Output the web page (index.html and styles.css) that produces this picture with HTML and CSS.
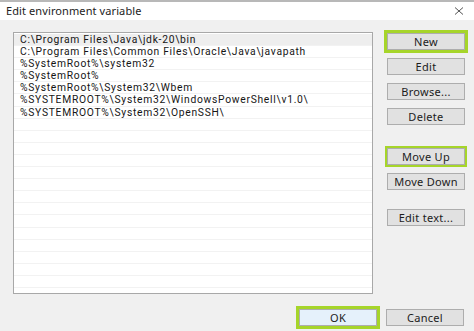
FILE: index.html
```html
<!DOCTYPE html>
<html>
<head>
<meta charset="utf-8">
<link rel="stylesheet" href="styles.css">
</head>
<body>
<div class="dialog">
  <div class="titlebar">
    <span class="title">Edit environment variable</span>
    <svg class="close" width="10" height="10" viewBox="0 0 10 10"><path d="M1 1.5 L9 8.5 M9 1.5 L1 8.5" stroke="#555" stroke-width="1" fill="none"/></svg>
  </div>
  <div class="content">
    <div class="main">
      <div class="list">
        <div class="row sel">C:\Program Files\Java\jdk-20\bin</div>
        <div class="row">C:\Program Files\Common Files\Oracle\Java\javapath</div>
        <div class="row">%SystemRoot%\system32</div>
        <div class="row">%SystemRoot%</div>
        <div class="row">%SystemRoot%\System32\Wbem</div>
        <div class="row">%SYSTEMROOT%\System32\WindowsPowerShell\v1.0\</div>
        <div class="row">%SYSTEMROOT%\System32\OpenSSH\</div>
        <div class="row"></div><div class="row"></div><div class="row"></div>
        <div class="row"></div><div class="row"></div><div class="row"></div>
        <div class="row"></div><div class="row"></div><div class="row"></div>
        <div class="row"></div><div class="row"></div><div class="row"></div>
        <div class="row"></div><div class="row"></div>
      </div>
      <div class="side">
        <button class="btn hl">New</button>
        <button class="btn">Edit</button>
        <button class="btn">Browse...</button>
        <button class="btn">Delete</button>
        <button class="btn hl2 g1">Move Up</button>
        <button class="btn">Move Down</button>
        <button class="btn g2">Edit text...</button>
      </div>
    </div>
    <div class="footer">
      <button class="btn ok hl">OK</button>
      <button class="btn">Cancel</button>
    </div>
  </div>
</div>
</body>
</html>
```
FILE: styles.css
```css
* { box-sizing: border-box; }
html, body { margin: 0; padding: 0; }
body {
  width: 474px;
  height: 331px;
  background: #f0f0f0;
  font-family: "Noto Sans", "Open Sans", sans-serif;
  overflow: hidden;
}
.dialog { width: 474px; height: 331px; display: flex; flex-direction: column; }
.titlebar {
  height: 20px;
  background: #fff;
  border-top: 2px solid #b8b8b8;
  display: flex;
  align-items: center;
  justify-content: space-between;
  padding: 0 10px 0 6px;
}
.title { font-size: 11px; color: #222; line-height: 14px; letter-spacing: 0.1px; }
.close { display: block; }
.content { padding: 12px 0 0 13px; display: flex; flex-direction: column; }
.main { display: flex; gap: 14px; }
.list {
  width: 360px;
  height: 262px;
  background: #fff;
  border: 1px solid #a8a8a8;
  padding-top: 1px;
  overflow: hidden;
}
.row {
  height: 12.1px;
  line-height: 12px;
  font-family: Roboto, "Liberation Sans", sans-serif;
  font-size: 10.3px;
  letter-spacing: 0.72px;
  color: #151515;
  padding-left: 6px;
  white-space: nowrap;
  border-bottom: 1px solid #f2f2f2;
}
.row.sel { background: #eeeeee; }
.side { display: flex; flex-direction: column; gap: 8px; padding-top: 1px; }
.btn {
  width: 78px;
  height: 17px;
  background: #e1e1e1;
  border: 1px solid #adadad;
  font-family: "Noto Sans", "Open Sans", sans-serif;
  font-size: 11px;
  letter-spacing: 0.3px;
  color: #1c1c1c;
  padding: 0;
  line-height: 15px;
  text-align: center;
}
.hl { outline: 3px solid #a6d52a; outline-offset: 0; }
.hl2 { outline: 2px solid #a6d52a; outline-offset: 0; }
.g1 { margin-top: 15px; }
.g2 { margin-top: 11px; }
.footer {
  display: flex;
  justify-content: flex-end;
  gap: 9px;
  padding-right: 10px;
  margin-top: 15px;
}
.ok { background: #e5f1fb; }
```
